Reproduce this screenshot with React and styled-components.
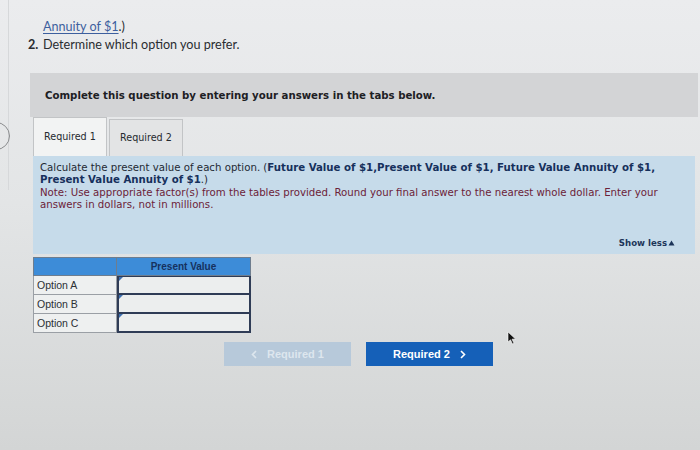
import React from 'react'
import styled, { createGlobalStyle } from 'styled-components'

const GlobalStyle = createGlobalStyle`
  html, body {
    margin: 0;
    padding: 0;
  }
  body {
    width: 700px;
    height: 450px;
    overflow: hidden;
    background: linear-gradient(180deg, #ebecee 0%, #e3e5e6 45%, #d3d5d5 100%);
    font-family: 'DejaVu Sans', Verdana, sans-serif;
  }
`

const Page = styled.div`
  position: relative;
  width: 700px;
  height: 450px;
  padding: 18px 2px 0 30px;
  box-sizing: border-box;
`

const EdgePanel = styled.div`
  position: absolute;
  left: 0;
  top: 0;
  width: 8px;
  height: 190px;
  border-right: 1px solid #d6d8da;
`

const EdgeCircle = styled.div`
  position: absolute;
  left: -18px;
  top: 122px;
  width: 26px;
  height: 26px;
  border: 1.5px solid #8a8c8e;
  border-radius: 50%;
`

const Intro = styled.div`
  font-family: Lato, 'Open Sans', sans-serif;
  color: #2a2d31;
  font-size: 12.6px;
  line-height: 18px;
`

const LinkLine = styled.div`
  padding-left: 13px;
  color: #2a2d31;
`

const Link = styled.span`
  color: #3d5f9e;
  text-decoration: underline;
  text-underline-offset: 2px;
`

const StepLine = styled.div`
  display: flex;
  gap: 1px;
  margin-left: -2px;
  b {
    font-weight: 700;
    width: 14px;
  }
`

const Banner = styled.div`
  margin-top: 19px;
  height: 44px;
  background: #d3d4d6;
  display: flex;
  align-items: center;
  padding-left: 15px;
  font-size: 10.2px;
  font-weight: 700;
  color: #1d2024;
`

const Content = styled.div`
  margin-left: 3px;
  width: 662px;
`

const Tabs = styled.div`
  display: flex;
  align-items: flex-end;
  gap: 2px;
  height: 39px;
`

const Tab = styled.div`
  box-sizing: border-box;
  width: 74px;
  height: ${p => (p.$active ? '39px' : '37px')};
  padding-top: ${p => (p.$active ? '13px' : '12px')};
  padding-left: 10px;
  background: ${p => (p.$active ? '#f2f3f3' : '#e3e4e5')};
  border: 1px solid #c2c4c6;
  border-bottom: none;
  font-size: 9.6px;
  color: #25292e;
`

const InfoPanel = styled.div`
  position: relative;
  height: 98px;
  box-sizing: border-box;
  background: #c6dbea;
  padding: 6px 7px 0 7px;
  font-size: 10.2px;
  line-height: 12.4px;
  color: #1f2933;
`

const Line = styled.div`
  white-space: nowrap;
`

const Strong = styled.b`
  color: #16305c;
`

const Note = styled.div`
  color: #6c2238;
`

const ShowLess = styled.div`
  position: absolute;
  right: 20px;
  bottom: 5px;
  font-size: 8.6px;
  font-weight: 700;
  color: #1d3559;
  display: flex;
  align-items: center;
  gap: 1px;
`

const Table = styled.div`
  margin-top: 3px;
  display: grid;
  grid-template-columns: 84px 134px;
  width: 218px;
`

const HeadCell = styled.div`
  height: 19px;
  box-sizing: border-box;
  background: #3d8cd8;
  border: 1px solid #6e7d8e;
  border-left: ${p => (p.$first ? '1px solid #6e7d8e' : 'none')};
  display: flex;
  align-items: center;
  justify-content: center;
  font-family: 'Liberation Sans', Arial, sans-serif;
  font-weight: 700;
  font-size: 10px;
  color: #16315e;
`

const LabelCell = styled.div`
  height: 19px;
  box-sizing: border-box;
  background: #eef0f0;
  border: 1px solid #9a9fa5;
  border-top: none;
  display: flex;
  align-items: center;
  padding-left: 3px;
  font-family: 'Liberation Sans', Arial, sans-serif;
  font-size: 10.5px;
  color: #2b2f34;
`

const InputCell = styled.div`
  position: relative;
  height: 19px;
  box-sizing: border-box;
  background: #eceeee;
  border: 2px solid #2f3c56;
  border-top: ${p => (p.$first ? '1px' : '0px')} solid #2f3c56;
  &::before {
    content: '';
    position: absolute;
    left: 0;
    top: 0;
    border-top: 4px solid #3d6fb0;
    border-right: 4px solid transparent;
  }
`

const Buttons = styled.div`
  display: flex;
  gap: 15px;
  margin: 9px 0 0 191px;
`

const NavButton = styled.div`
  width: 127px;
  height: 24px;
  box-sizing: border-box;
  display: flex;
  align-items: center;
  justify-content: center;
  gap: 10px;
  font-family: 'Liberation Sans', Arial, sans-serif;
  font-weight: 700;
  font-size: 11px;
  background: ${p => (p.$disabled ? '#b7c9da' : '#1560b8')};
  color: ${p => (p.$disabled ? '#dde6ee' : '#ffffff')};
`

const Cursor = styled.svg`
  position: absolute;
  left: 507px;
  top: 331px;
`

const rows = ['Option A', 'Option B', 'Option C']

const Chevron = ({ dir, color }) => (
  <svg width="6" height="9" viewBox="0 0 6 9">
    <path
      d={dir === 'left' ? 'M5 1 L1.5 4.5 L5 8' : 'M1 1 L4.5 4.5 L1 8'}
      fill="none"
      stroke={color}
      strokeWidth="1.6"
    />
  </svg>
)

export default function App() {
  return (
    <Page>
      <GlobalStyle />
      <EdgePanel />
      <EdgeCircle />
      <Intro>
        <LinkLine>
          <Link>Annuity of $1</Link>.)
        </LinkLine>
        <StepLine>
          <b>2.</b>
          <span>Determine which option you prefer.</span>
        </StepLine>
      </Intro>

      <Banner>Complete this question by entering your answers in the tabs below.</Banner>

      <Content>
        <Tabs>
          <Tab $active>Required 1</Tab>
          <Tab>Required 2</Tab>
        </Tabs>

        <InfoPanel>
          <Line>
            Calculate the present value of each option. (
            <Strong>Future Value of $1,Present Value of $1, Future Value Annuity of $1,</Strong>
          </Line>
          <Line>
            <Strong>Present Value Annuity of $1</Strong>.)
          </Line>
          <Note>
            Note: Use appropriate factor(s) from the tables provided. Round your final answer to
            the nearest whole dollar. Enter your answers in dollars, not in millions.
          </Note>
          <ShowLess>
            Show less
            <svg width="7" height="6" viewBox="0 0 7 6">
              <path d="M3.5 0.5 L6.5 5.5 L0.5 5.5 Z" fill="#1d3559" />
            </svg>
          </ShowLess>
        </InfoPanel>

        <Table>
          <HeadCell $first />
          <HeadCell>Present Value</HeadCell>
          {rows.map((r, i) => (
            <React.Fragment key={r}>
              <LabelCell>{r}</LabelCell>
              <InputCell $first={i === 0} />
            </React.Fragment>
          ))}
        </Table>

        <Buttons>
          <NavButton $disabled>
            <Chevron dir="left" color="#dde6ee" />
            Required 1
          </NavButton>
          <NavButton>
            Required 2
            <Chevron dir="right" color="#ffffff" />
          </NavButton>
        </Buttons>
      </Content>

      <Cursor width="10" height="14" viewBox="0 0 10 14">
        <path d="M1 1 L1 11 L3.5 8.8 L5.5 13 L7 12.3 L5 8.2 L8.5 8 Z" fill="#111" stroke="#fff" strokeWidth="0.6" />
      </Cursor>
    </Page>
  )
}
